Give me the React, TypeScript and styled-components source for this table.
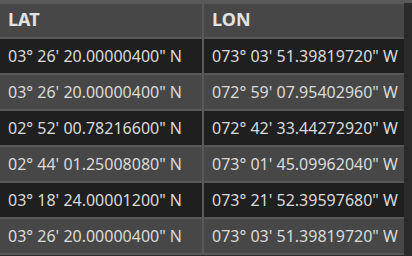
import React from "react";
import styled, { createGlobalStyle } from "styled-components";

const Global = createGlobalStyle`
  html, body { margin: 0; padding: 0; background: #2b2b2b; }
  body { width: 412px; height: 256px; overflow: hidden; }
`;

const Frame = styled.div`
  display: flex;
  width: 412px;
  height: 256px;
  border-top: 3px solid #595959;
  box-sizing: border-box;
  background: #2b2b2b;
`;

const Grid = styled.div`
  display: grid;
  grid-template-columns: 202px 200px;
  grid-template-rows: 33px;
  grid-auto-rows: 34px;
  column-gap: 2px;
  row-gap: 2px;
  padding: 1px 0 2px 0;
  background: #585858;
  width: 404px;
  box-sizing: border-box;
  align-self: flex-start;
  font-family: "Noto Sans", "Open Sans", sans-serif;
`;

const Cell = styled.div<{ $tone: "head" | "dark" | "light" }>`
  display: flex;
  align-items: center;
  padding-left: 8px;
  padding-bottom: ${(p) => (p.$tone === "head" ? "3px" : "0")};
  font-size: ${(p) => (p.$tone === "head" ? "18px" : "16px")};
  background: ${(p) => (p.$tone === "dark" ? "#1f1f1f" : "#474747")};
  color: ${(p) => (p.$tone === "head" ? "#e2e2e2" : "#dadada")};
  font-weight: ${(p) => (p.$tone === "head" ? 700 : 400)};
  white-space: nowrap;
`;

const rows: [string, string][] = [
  ["03° 26' 20.00000400\" N", "073° 03' 51.39819720\" W"],
  ["03° 26' 20.00000400\" N", "072° 59' 07.95402960\" W"],
  ["02° 52' 00.78216600\" N", "072° 42' 33.44272920\" W"],
  ["02° 44' 01.25008080\" N", "073° 01' 45.09962040\" W"],
  ["03° 18' 24.00001200\" N", "073° 21' 52.39597680\" W"],
  ["03° 26' 20.00000400\" N", "073° 03' 51.39819720\" W"],
];

export default function App() {
  return (
    <>
      <Global />
      <Frame>
        <Grid>
          <Cell $tone="head">LAT</Cell>
          <Cell $tone="head">LON</Cell>
          {rows.map((r, i) => (
            <React.Fragment key={i}>
              <Cell $tone={i % 2 === 0 ? "dark" : "light"}>{r[0]}</Cell>
              <Cell $tone={i % 2 === 0 ? "dark" : "light"}>{r[1]}</Cell>
            </React.Fragment>
          ))}
        </Grid>
      </Frame>
    </>
  );
}
